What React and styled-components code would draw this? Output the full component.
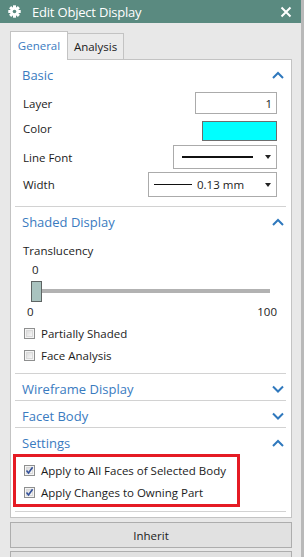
import React from "react";
import styled, { createGlobalStyle } from "styled-components";

const GlobalStyle = createGlobalStyle`
  html, body {
    margin: 0;
    padding: 0;
    background: #e8e8e8;
  }
  body {
    font-family: "Open Sans", "Noto Sans", sans-serif;
    font-size: 11.5px;
    color: #1b1b1b;
  }
`;

const Window = styled.div`
  width: 304px;
  height: 557px;
  box-sizing: border-box;
  background: #e8e8e8;
  border-right: 3px solid #b9b9b9;
  overflow: hidden;
`;

const TitleBar = styled.div`
  height: 23px;
  background: #5a8a80;
  display: flex;
  align-items: center;
  padding: 0 9px 0 8px;
  color: #fff;
`;

const TitleText = styled.span`
  flex: 1;
  margin-left: 11px;
  font-size: 13px;
  letter-spacing: -0.2px;
`;

const Body = styled.div`
  padding: 8px 9px 0 10px;
`;

const TabRow = styled.div`
  display: flex;
  align-items: flex-end;
  height: 28px;
`;

const Tab = styled.div`
  box-sizing: border-box;
  display: flex;
  align-items: center;
  justify-content: center;
  border: 1px solid #c3c3c3;
  border-bottom: none;
  background: ${(p) => (p.$active ? "#fff" : "#ebebeb")};
  color: ${(p) => (p.$active ? "#3a7bbf" : "#1b1b1b")};
  height: ${(p) => (p.$active ? "29px" : "26px")};
  width: ${(p) => (p.$active ? "58px" : "57px")};
  margin-bottom: ${(p) => (p.$active ? "-1px" : "0")};
  margin-left: ${(p) => (p.$active ? "0" : "-1px")};
  position: relative;
  z-index: ${(p) => (p.$active ? 2 : 1)};
  padding-bottom: ${(p) => (p.$active ? "2px" : "0")};
`;

const Panel = styled.div`
  background: #fff;
  border: 1px solid #c3c3c3;
  padding-bottom: 5px;
`;

const Section = styled.div`
  margin: 0 5px 0 4px;
  border-bottom: 1px solid #d2d2d2;
`;

const SectionHeader = styled.div`
  box-sizing: border-box;
  height: 26px;
  padding: 3px 2px 0 7px;
  display: flex;
  align-items: center;
  justify-content: space-between;
  color: #3a7bbf;
  font-size: 13px;
`;

const SectionBody = styled.div`
  padding: ${(p) => p.$pad || "0"};
  padding-left: 8px;
  padding-right: 9px;
`;

const FieldRow = styled.div`
  height: ${(p) => p.$h}px;
  display: flex;
  align-items: ${(p) => p.$align || "center"};
  justify-content: space-between;
`;

const Label = styled.span`
  margin-top: ${(p) => p.$shift || 0}px;
`;

const TextInput = styled.div`
  box-sizing: border-box;
  width: 82px;
  height: 22px;
  border: 1px solid #ababab;
  display: flex;
  align-items: center;
  justify-content: flex-end;
  padding-right: 4px;
`;

const ColorSwatch = styled.div`
  box-sizing: border-box;
  width: 75px;
  height: 20px;
  margin-top: 3px;
  background: ${(p) => p.$color};
  border: 1px solid #6d6d6d;
`;

const Select = styled.div`
  box-sizing: border-box;
  width: ${(p) => p.$w}px;
  height: ${(p) => p.$h}px;
  border: 1px solid #ababab;
  display: flex;
  align-items: center;
  padding: 0 5px 0 ${(p) => p.$pl || 8}px;
`;

const SampleLine = styled.div`
  width: ${(p) => p.$w}px;
  height: ${(p) => p.$t}px;
  background: #111;
`;

const SelectText = styled.span`
  margin-left: 5px;
  flex: 1;
`;

const Caret = styled.span`
  margin-left: auto;
  width: 0;
  height: 0;
  border-left: 3.5px solid transparent;
  border-right: 3.5px solid transparent;
  border-top: 4px solid #222;
`;

const SliderBlock = styled.div`
  display: flex;
  flex-direction: column;
`;

const TopValue = styled.div`
  height: 18px;
  display: flex;
  align-items: center;
  padding-left: 9px;
`;

const SliderRow = styled.div`
  height: 26px;
  display: flex;
  align-items: center;
  padding-left: 8px;
  padding-right: 7px;
`;

const Thumb = styled.div`
  box-sizing: border-box;
  width: 11px;
  height: 21px;
  background: #a9c3bf;
  border: 1px solid #5e6463;
  flex-shrink: 0;
`;

const Track = styled.div`
  flex: 1;
  height: 4px;
  background: #b2b2b2;
`;

const ScaleRow = styled.div`
  height: 14px;
  display: flex;
  align-items: center;
  justify-content: space-between;
  padding-left: 4px;
  margin-bottom: 4px;
`;

const CheckRow = styled.label`
  height: 22px;
  display: flex;
  align-items: center;
  gap: 6px;
  padding-left: 1px;
`;

const Box = styled.span`
  box-sizing: border-box;
  width: 11px;
  height: 11px;
  border: 1px solid #8e8f8f;
  background: #f4f4f4;
  display: flex;
  align-items: center;
  justify-content: center;
  position: relative;
  flex-shrink: 0;

  &::before {
    content: "";
    position: absolute;
    inset: 1px;
    border: 1px solid #d9d9d9;
    background: linear-gradient(135deg, #dcdcdc, #f7f7f7);
  }
`;

const Highlight = styled.div`
  border: 3px solid #e51b24;
  margin: 0 46px 4px -2px;
  padding: 2px 0 1px 7px;
`;

const ButtonStack = styled.div`
  display: flex;
  flex-direction: column;
  gap: 3px;
  margin-top: 4px;
`;

const Button = styled.div`
  box-sizing: border-box;
  height: 26px;
  background: #e1e1e1;
  border: 1px solid #adadad;
  display: flex;
  align-items: center;
  justify-content: center;
`;

function Gear() {
  const teeth = [0, 45, 90, 135, 180, 225, 270, 315];
  return (
    <svg width="13" height="13" viewBox="0 0 13 13">
      <g fill="#fff">
        {teeth.map((a) => (
          <rect key={a} x="5" y="0.3" width="3" height="3" transform={`rotate(${a} 6.5 6.5)`} />
        ))}
        <circle cx="6.5" cy="6.5" r="4.4" />
      </g>
      <circle cx="6.5" cy="6.5" r="1.8" fill="#5a8a80" />
    </svg>
  );
}

function CloseIcon() {
  return (
    <svg width="12" height="12" viewBox="0 0 12 12">
      <path d="M1.5 1.5 L10.5 10.5 M10.5 1.5 L1.5 10.5" stroke="#fff" strokeWidth="2" />
    </svg>
  );
}

function Chevron({ up }) {
  return (
    <svg width="12" height="8" viewBox="0 0 12 8">
      <path
        d={up ? "M1 7 L6 2 L11 7" : "M1 1.5 L6 6.5 L11 1.5"}
        stroke="#2f78bd"
        strokeWidth="2"
        fill="none"
      />
    </svg>
  );
}

function Checkbox({ checked, children }) {
  return (
    <CheckRow>
      <Box>
        {checked && (
          <svg width="9" height="9" viewBox="0 0 9 9" style={{ position: "relative" }}>
            <path d="M1.5 4.6 L3.5 7 L7.6 1.2" stroke="#34519a" strokeWidth="1.6" fill="none" />
          </svg>
        )}
      </Box>
      {children}
    </CheckRow>
  );
}

export default function App() {
  return (
    <>
      <GlobalStyle />
      <Window>
        <TitleBar>
          <Gear />
          <TitleText>Edit Object Display</TitleText>
          <CloseIcon />
        </TitleBar>
        <Body>
          <TabRow>
            <Tab $active>General</Tab>
            <Tab>Analysis</Tab>
          </TabRow>
          <Panel>
            <Section>
              <SectionHeader>
                Basic
                <Chevron up />
              </SectionHeader>
              <SectionBody $pad="3px 0 9px">
                <FieldRow $h={28}>
                  <Label>Layer</Label>
                  <TextInput>1</TextInput>
                </FieldRow>
                <FieldRow $h={25}>
                  <Label $shift={-3}>Color</Label>
                  <ColorSwatch $color="#00ffff" />
                </FieldRow>
                <FieldRow $h={30}>
                  <Label>Line Font</Label>
                  <Select $w={104} $h={24} $pl={8}>
                    <SampleLine $w={71} $t={2} />
                    <Caret />
                  </Select>
                </FieldRow>
                <FieldRow $h={25}>
                  <Label>Width</Label>
                  <Select $w={129} $h={25} $pl={5}>
                    <SampleLine $w={38} $t={1} />
                    <SelectText>0.13 mm</SelectText>
                    <Caret />
                  </Select>
                </FieldRow>
              </SectionBody>
            </Section>

            <Section>
              <SectionHeader>
                Shaded Display
                <Chevron up />
              </SectionHeader>
              <SectionBody $pad="7px 0 7px">
                <FieldRow $h={20}>
                  <Label>Translucency</Label>
                </FieldRow>
                <SliderBlock>
                  <TopValue>0</TopValue>
                  <SliderRow>
                    <Thumb />
                    <Track />
                  </SliderRow>
                  <ScaleRow>
                    <span>0</span>
                    <span>100</span>
                  </ScaleRow>
                </SliderBlock>
                <Checkbox>Partially Shaded</Checkbox>
                <Checkbox>Face Analysis</Checkbox>
              </SectionBody>
            </Section>

            <Section>
              <SectionHeader>
                Wireframe Display
                <Chevron />
              </SectionHeader>
            </Section>

            <Section>
              <SectionHeader>
                Facet Body
                <Chevron />
              </SectionHeader>
            </Section>

            <Section>
              <SectionHeader>
                Settings
                <Chevron up />
              </SectionHeader>
              <Highlight>
                <Checkbox checked>Apply to All Faces of Selected Body</Checkbox>
                <Checkbox checked>Apply Changes to Owning Part</Checkbox>
              </Highlight>
            </Section>
          </Panel>
          <ButtonStack>
            <Button>Inherit</Button>
            <Button />
          </ButtonStack>
        </Body>
      </Window>
    </>
  );
}
